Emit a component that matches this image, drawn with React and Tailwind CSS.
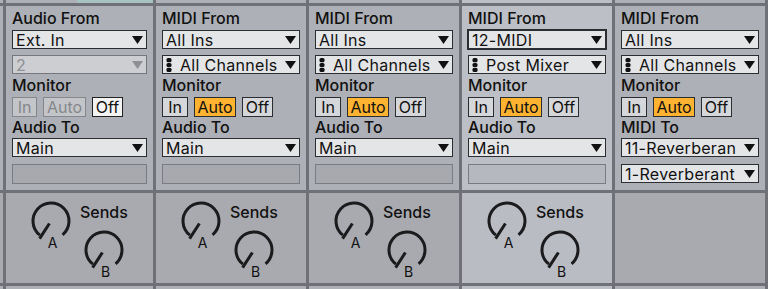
import React from 'react';

const FONT = { fontFamily: 'Inter, "Liberation Sans", sans-serif' };

const COLUMNS = [
  {
    kind: 'audio',
    fromLabel: 'Audio From',
    from: 'Ext. In',
    sub: '2',
    toLabel: 'Audio To',
    to: 'Main',
  },
  { kind: 'midi', fromLabel: 'MIDI From', from: 'All Ins', sub: 'All Channels', toLabel: 'Audio To', to: 'Main' },
  { kind: 'midi', fromLabel: 'MIDI From', from: 'All Ins', sub: 'All Channels', toLabel: 'Audio To', to: 'Main' },
  {
    kind: 'midi',
    fromLabel: 'MIDI From',
    from: '12-MIDI',
    sub: 'Post Mixer',
    toLabel: 'Audio To',
    to: 'Main',
    focused: true,
    selected: true,
  },
  {
    kind: 'midiOut',
    fromLabel: 'MIDI From',
    from: 'All Ins',
    sub: 'All Channels',
    toLabel: 'MIDI To',
    to: '11-Reverberant',
    to2: '1-Reverberant',
  },
];

function Triangle({ color = '#111' }) {
  return (
    <svg width="11" height="8" viewBox="0 0 11 8" className="shrink-0">
      <polygon points="0,0 11,0 5.5,8" fill={color} />
    </svg>
  );
}

function ChannelIcon() {
  return (
    <svg width="6" height="14" viewBox="0 0 6 14" className="shrink-0">
      <rect x="0.5" y="0" width="5" height="4.2" rx="1.5" fill="#111" />
      <rect x="0.5" y="4.9" width="5" height="4.2" rx="1.5" fill="#111" />
      <rect x="0.5" y="9.8" width="5" height="4.2" rx="1.5" fill="#111" />
    </svg>
  );
}

function Dropdown({ text, disabled, icon, focused }) {
  return (
    <div
      className={`h-[19px] flex items-center pl-[3px] pr-[3px] gap-[8px] border text-[16px] leading-[16px] ${
        disabled
          ? 'bg-[#cdced2] border-[#75777c] text-[#8e9095]'
          : 'bg-[#e4e5e7] border-[#2c2d31] text-[#111]'
      } ${focused ? 'ring-1 ring-[#2c2d31]' : ''}`}
    >
      {icon && <ChannelIcon />}
      <span className="flex-1 min-w-0 whitespace-nowrap tracking-[0.3px] [clip-path:inset(-4px_0_-4px_0)]">
        {text}
      </span>
      <Triangle color={disabled ? '#8e9095' : '#111'} />
    </div>
  );
}

function MonitorButtons({ audio }) {
  const base = 'h-[20px] flex items-center justify-center border text-[16px] leading-[16px]';
  if (audio) {
    return (
      <div className="flex gap-[6px] mt-[3px]">
        <div className={`${base} w-[25px] bg-[#c3c5c9] border-[#85878c] text-[#85878c]`}>In</div>
        <div className={`${base} w-[43px] bg-[#c3c5c9] border-[#85878c] text-[#85878c]`}>Auto</div>
        <div className={`${base} w-[31px] bg-[#f3f3f4] border-[#222] text-[#111]`}>Off</div>
      </div>
    );
  }
  return (
    <div className="flex gap-[6px] mt-[3px]">
      <div className={`${base} w-[26px] bg-[#d6d7da] border-[#2c2d31] text-[#111]`}>In</div>
      <div className={`${base} w-[42px] bg-[#ffb330] border-[#2c2d31] text-[#111]`}>Auto</div>
      <div className={`${base} w-[31px] bg-[#d6d7da] border-[#2c2d31] text-[#111]`}>Off</div>
    </div>
  );
}

function Label({ children, className = '' }) {
  return <div className={`h-[18px] text-[16px] leading-[18px] font-medium text-[#111] ${className}`}>{children}</div>;
}

function IOColumn({ col }) {
  const bg = col.selected ? 'bg-[#bcbfc5]' : 'bg-[#adb0b6]';
  return (
    <div className={`${bg} flex flex-col px-[6px] pt-[3px] h-full`}>
      <Label>{col.fromLabel}</Label>
      <div className="mt-[3px]">
        <Dropdown text={col.from} focused={col.focused} />
      </div>
      <div className="mt-[6px]">
        <Dropdown text={col.sub} disabled={col.kind === 'audio'} icon={col.kind !== 'audio'} />
      </div>
      <Label className="mt-[2px]">Monitor</Label>
      <MonitorButtons audio={col.kind === 'audio'} />
      <Label className="mt-[1px]">{col.toLabel}</Label>
      <div className="mt-[2px]">
        <Dropdown text={col.to} />
      </div>
      <div className="mt-[7px]">
        {col.kind === 'midiOut' ? (
          <Dropdown text={col.to2} />
        ) : (
          <div
            className={`h-[20px] border border-[#7a7c82] ${col.selected ? 'bg-[#b5b8be]' : 'bg-[#a7a9af]'}`}
          />
        )}
      </div>
    </div>
  );
}

function Knob({ letter }) {
  return (
    <svg width="44" height="54" viewBox="0 0 44 54" className="shrink-0">
      <path
        d="M10.91 36.18 A18 18 0 1 1 33.57 35.79"
        fill="none"
        stroke="#1b1b1d"
        strokeWidth="3"
      />
      <line x1="20.4" y1="24.5" x2="10.6" y2="39.6" stroke="#1b1b1d" strokeWidth="3" />
      <text
        x="23.5"
        y="49"
        textAnchor="middle"
        fontSize="14"
        fill="#111"
        style={FONT}
      >
        {letter}
      </text>
    </svg>
  );
}

function SendsColumn({ col }) {
  const bg = col.selected ? 'bg-[#b9bcc2]' : 'bg-[#a8aab0]';
  if (col.kind === 'midiOut') return <div className={`${bg} h-full`} />;
  return (
    <div className={`${bg} h-full flex pl-[23px] pt-[6px]`}>
      <Knob letter="A" />
      <div className="flex flex-col ml-[7px]">
        <div className="mt-[4px] h-[18px] text-[16px] leading-[18px] font-medium text-[#111]">Sends</div>
        <div className="ml-[2px] mt-[7px]">
          <Knob letter="B" />
        </div>
      </div>
    </div>
  );
}

export default function App() {
  const widths = ['w-[147px]', 'w-[150px]', 'w-[150px]', 'w-[150px]', 'w-[150px]'];
  return (
    <div className="w-[768px] h-[289px] overflow-hidden bg-[#6f7177] flex flex-col" style={FONT}>
      {/* top strip (previous row) */}
      <div className="h-[3px] flex gap-[3px] pr-[3px]">
        <div className="w-[3px] bg-[#adb0b6]" />
        <div className="w-[147px] flex">
          <div className="w-[71px] bg-[#adb0b6]" />
          <div className="flex-1 bg-[#a6c3c1]" />
        </div>
        <div className="w-[150px] bg-[#adb0b6]" />
        <div className="w-[150px] bg-[#adb0b6]" />
        <div className="w-[150px] bg-[#bcbfc5]" />
        <div className="w-[150px] bg-[#adb0b6]" />
      </div>

      {/* I/O row */}
      <div className="mt-[3px] h-[184px] flex gap-[3px] pr-[3px]">
        <div className="w-[3px] bg-[#adb0b6]" />
        {COLUMNS.map((col, i) => (
          <div key={i} className={widths[i]}>
            <IOColumn col={col} />
          </div>
        ))}
      </div>

      {/* Sends row */}
      <div className="mt-[3px] h-[90px] flex gap-[3px] pr-[3px]">
        <div className="w-[3px] bg-[#a8aab0]" />
        {COLUMNS.map((col, i) => (
          <div key={i} className={widths[i]}>
            <SendsColumn col={col} />
          </div>
        ))}
      </div>

      {/* bottom strip */}
      <div className="mt-[3px] h-[3px] flex gap-[3px] pr-[3px]">
        <div className="w-[3px] bg-[#adb0b6]" />
        {COLUMNS.map((col, i) => (
          <div key={i} className={`${widths[i]} ${col.selected ? 'bg-[#bcbfc5]' : 'bg-[#adb0b6]'}`} />
        ))}
      </div>
    </div>
  );
}
